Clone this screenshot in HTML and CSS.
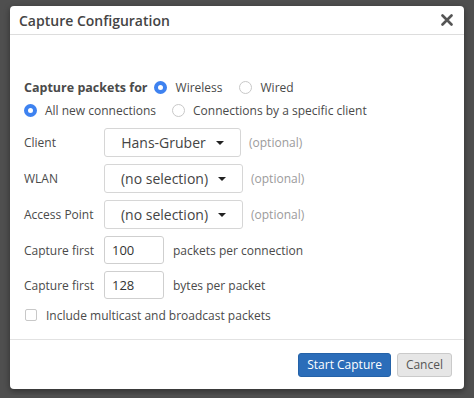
FILE: index.html
```html
<!DOCTYPE html>
<html lang="en">
<head>
  <meta charset="UTF-8">
  <title>Capture Configuration</title>
  <link rel="stylesheet" href="styles.css">
</head>
<body>

  <!-- Dialog -->
  <div class="dialog">
    <div class="dialog-header">
      <div class="dialog-title">Capture Configuration</div>
      <svg class="close" width="12" height="12" viewBox="0 0 12 12">
        <path d="M1.5 1.5 L10.5 10.5 M10.5 1.5 L1.5 10.5" stroke="#555" stroke-width="2.6" stroke-linecap="round"/>
      </svg>
    </div>

    <div class="dialog-body">
      <div class="row radio-row">
        <span class="strong">Capture packets for</span>
        <label class="radio"><span class="dot checked"></span> Wireless</label>
        <label class="radio"><span class="dot"></span> Wired</label>
      </div>

      <div class="row radio-row second">
        <label class="radio"><span class="dot checked"></span> All new connections</label>
        <label class="radio"><span class="dot"></span> Connections by a specific client</label>
      </div>

      <div class="row field">
        <div class="label">Client</div>
        <div class="select client">Hans-Gruber <span class="caret"></span></div>
        <span class="hint">(optional)</span>
      </div>

      <div class="row field">
        <div class="label">WLAN</div>
        <div class="select">(no selection) <span class="caret"></span></div>
        <span class="hint">(optional)</span>
      </div>

      <div class="row field">
        <div class="label">Access Point</div>
        <div class="select">(no selection) <span class="caret"></span></div>
        <span class="hint">(optional)</span>
      </div>

      <div class="row field num">
        <div class="label">Capture first</div>
        <div class="input">100</div>
        <span>packets per connection</span>
      </div>

      <div class="row field num">
        <div class="label">Capture first</div>
        <div class="input">128</div>
        <span>bytes per packet</span>
      </div>

      <div class="row check-row">
        <span class="box"></span>
        <span>Include multicast and broadcast packets</span>
      </div>
    </div>

    <div class="dialog-footer">
      <button class="btn primary">Start Capture</button>
      <button class="btn">Cancel</button>
    </div>
  </div>

</body>
</html>
```

FILE: styles.css
```css
body {
  margin: 0;
  padding: 6px 10px;
  background: #4f4f4f;
  font-family: 'Open Sans', sans-serif;
  font-size: 12px;
  color: #4a4a4a;
}

/* Dialog */
.dialog {
  width: 454px;
  height: 383px;
  background: #fff;
  border-radius: 4px;
  display: flex;
  flex-direction: column;
  box-shadow: 0 2px 6px rgba(0,0,0,0.4);
}

.dialog-header {
  height: 28px;
  padding: 0 11px 0 9px;
  display: flex;
  justify-content: space-between;
  align-items: center;
  border-bottom: 1px solid #ddd;
}

.dialog-title {
  font-size: 14px;
  font-weight: 600;
  color: #444;
}

.dialog-body {
  flex: 1;
  padding: 42px 14px 0 14px;
  border-bottom: 1px solid #e2e2e2;
}

.row {
  display: flex;
  align-items: center;
}

.radio-row {
  height: 20px;
  gap: 16px;
}

.radio-row.second {
  margin-top: 3px;
}

.radio-row.second .radio {
  gap: 8px;
}

.strong {
  font-weight: bold;
  font-size: 12.5px;
  margin-right: -10px;
}

.radio {
  display: flex;
  align-items: center;
  gap: 9px;
}

.dot {
  width: 11px;
  height: 11px;
  border: 1px solid #c8c8c8;
  border-radius: 50%;
  background: #fff;
  display: inline-block;
}

.dot.checked {
  width: 5px;
  height: 5px;
  border: 4px solid #3e82f0;
  background: #fff;
}

/* Fields */
.field {
  height: 29px;
  margin-top: 7px;
}

.radio-row.second + .field {
  margin-top: 8px;
}

.label {
  width: 80px;
}

.select {
  box-sizing: border-box;
  width: 139px;
  height: 29px;
  border: 1px solid #d6d6d6;
  border-radius: 3px;
  display: flex;
  align-items: center;
  justify-content: center;
  gap: 10px;
  font-size: 14px;
  color: #444;
  margin-right: 8px;
}

.select.client {
  width: 137px;
}

.caret {
  width: 0;
  height: 0;
  border-left: 4px solid transparent;
  border-right: 4px solid transparent;
  border-top: 4px solid #222;
}

.hint {
  color: #9b9b9b;
}

.num {
  height: 28px;
}

.input {
  box-sizing: border-box;
  width: 60px;
  height: 28px;
  border: 1px solid #cfcfcf;
  border-radius: 3px;
  padding-left: 7px;
  display: flex;
  align-items: center;
  font-size: 13px;
  color: #333;
  margin-right: 9px;
}

.check-row {
  height: 20px;
  margin-top: 6px;
  gap: 9px;
  padding-left: 1px;
}

.box {
  width: 10px;
  height: 10px;
  border: 1px solid #c8c8c8;
  border-radius: 2px;
}

/* Footer */
.dialog-footer {
  height: 49px;
  padding: 0 12px;
  display: flex;
  justify-content: flex-end;
  align-items: center;
  gap: 6px;
}

.btn {
  height: 24px;
  padding: 0 8px;
  font-family: 'Open Sans', sans-serif;
  font-size: 12px;
  white-space: nowrap;
  color: #555;
  background: #e6e6e6;
  border: 1px solid #cacaca;
  border-radius: 3px;
}

.btn.primary {
  background: #2b6db9;
  border-color: #2462a8;
  color: #fff;
}
```
